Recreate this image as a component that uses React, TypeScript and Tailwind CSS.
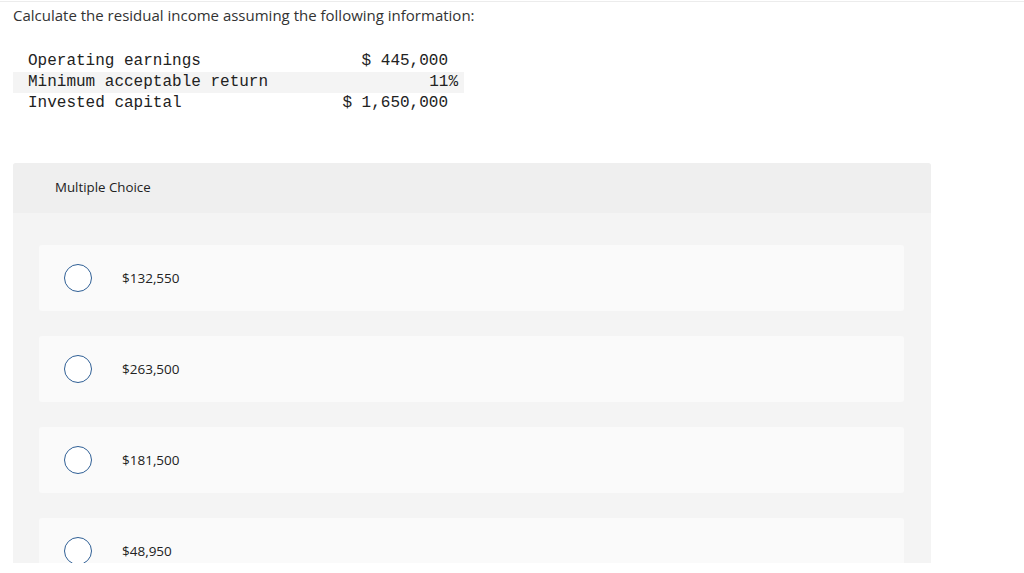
import React from 'react';

const rows = [
  { label: 'Operating earnings', value: '$ 445,000', shade: false, pad: 'pr-[16px]' },
  { label: 'Minimum acceptable return', value: '11%', shade: true, pad: 'pr-[6px]' },
  { label: 'Invested capital', value: '$ 1,650,000', shade: false, pad: 'pr-[16px]' },
];

const choices = ['$132,550', '$263,500', '$181,500', '$48,950'];

export default function App() {
  return (
    <div className="w-full h-[573px] bg-white">
      <div className="h-[563px] overflow-hidden bg-white text-[#222] font-['Open_Sans',sans-serif]">
        <div className="mt-px border-t border-[#ececec]" />
        <div className="px-[13px]">
          <p className="pt-[4px] text-[15px] leading-[18px] text-[#333]">
            Calculate the residual income assuming the following information:
          </p>

          <table className="mt-[27px] w-[451px] border-collapse font-['Liberation_Mono',monospace] text-[16px] text-[#222]">
            <tbody>
              {rows.map((r) => (
                <tr key={r.label} className={r.shade ? 'bg-[#f4f4f4]' : ''}>
                  <td className="h-[21px] pl-[15px] leading-[21px] whitespace-pre">{r.label}</td>
                  <td className={`h-[21px] text-right leading-[21px] whitespace-pre ${r.pad}`}>{r.value}</td>
                </tr>
              ))}
            </tbody>
          </table>

          <div className="mt-[49px] w-[918px] rounded-t-[3px] bg-[#f4f4f4]">
            <div className="flex h-[50px] items-center rounded-t-[3px] bg-[#efefef] pl-[42px] text-[13.3px]">
              Multiple Choice
            </div>
            <div className="flex flex-col gap-[25px] pt-[32px] pl-[26px] pr-[27px] pb-8">
              {choices.map((c) => (
                <div key={c} className="flex h-[66px] items-center rounded-[3px] bg-[#fafafa] pl-[25px]">
                  <span className="h-[28px] w-[28px] shrink-0 rounded-full border-[1.5px] border-[#2f5f95] bg-white" />
                  <span className="ml-[30px] text-[13.5px]">{c}</span>
                </div>
              ))}
            </div>
          </div>
        </div>
      </div>
    </div>
  );
}
